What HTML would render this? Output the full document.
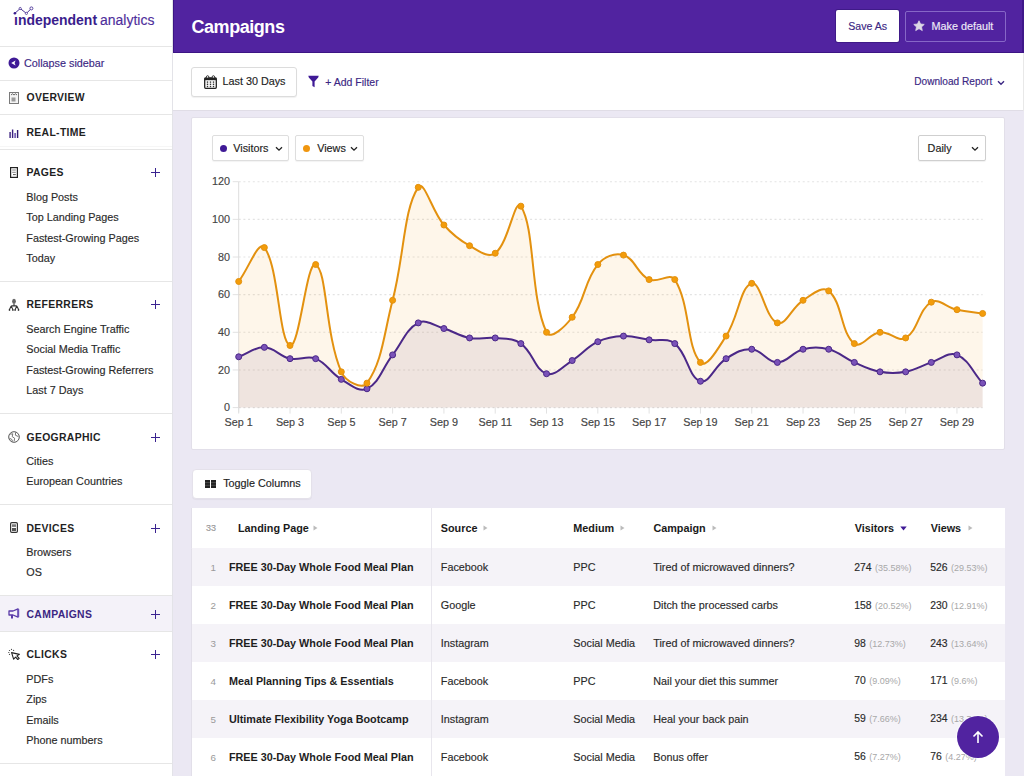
<!DOCTYPE html>
<html><head><meta charset="utf-8"><style>
html,body{margin:0;padding:0;width:1024px;height:776px;overflow:hidden;background:#fff;font-family:"Liberation Sans", sans-serif;}
.t{position:absolute;white-space:nowrap;line-height:1;-webkit-text-stroke:0.15px currentColor;}
</style></head><body>
<div style="position:absolute;left:0px;top:0px;width:172px;height:776px;background:#fff;"></div>
<div style="position:absolute;left:172px;top:0px;width:1px;height:776px;background:#e3e3e8;"></div>
<svg style="position:absolute;left:0px;top:0px" width="40" height="20" viewBox="0 0 40 20"><polyline points="14.9,13.3 20.2,8.5 26.4,13.4 31.4,8.4" fill="none" stroke="#4a3396" stroke-width="1"/><circle cx="14.9" cy="13.3" r="1.3" fill="#3a1d8c"/><circle cx="20.2" cy="8.5" r="1.1" fill="#fff" stroke="#4a3396" stroke-width="0.8"/><circle cx="26.4" cy="13.4" r="1.1" fill="#fff" stroke="#4a3396" stroke-width="0.8"/><circle cx="31.4" cy="8.4" r="1.5" fill="#fff" stroke="#4a3396" stroke-width="0.9"/></svg>
<div class="t" style="left:13.6px;top:11.73px;font-size:15.2px;font-weight:bold;color:#3a1d8c;-webkit-text-stroke:0;transform:scaleX(0.92);transform-origin:0 0;">&#305;ndependent</div>
<div class="t" style="left:100px;top:11.73px;font-size:15.2px;font-weight:normal;color:#4f2f9c;transform:scaleX(0.92);transform-origin:0 0;">analytics</div>
<div style="position:absolute;left:0px;top:46px;width:172px;height:1px;background:#e6e6e6;"></div>
<div style="position:absolute;left:0px;top:80px;width:172px;height:1px;background:#e6e6e6;"></div>
<div style="position:absolute;left:0px;top:114px;width:172px;height:1px;background:#e6e6e6;"></div>
<div style="position:absolute;left:0px;top:149px;width:172px;height:1px;background:#e6e6e6;"></div>
<div style="position:absolute;left:0px;top:281px;width:172px;height:1px;background:#e6e6e6;"></div>
<div style="position:absolute;left:0px;top:413px;width:172px;height:1px;background:#e6e6e6;"></div>
<div style="position:absolute;left:0px;top:504px;width:172px;height:1px;background:#e6e6e6;"></div>
<div style="position:absolute;left:0px;top:595px;width:172px;height:1px;background:#e6e6e6;"></div>
<div style="position:absolute;left:0px;top:631px;width:172px;height:1px;background:#e6e6e6;"></div>
<div style="position:absolute;left:0px;top:763px;width:172px;height:1px;background:#e6e6e6;"></div>
<div style="position:absolute;left:0px;top:146px;width:172px;height:1px;background:#f6f6f6;"></div>
<div style="position:absolute;left:0px;top:596px;width:172px;height:35px;background:#f4f2f9;"></div>
<svg style="position:absolute;left:8px;top:57px" width="12" height="12" viewBox="0 0 12 12"><circle cx="6" cy="6" r="5.5" fill="#3f1a96"/><path d="M3.2,6 L7.6,3.6 L6.6,6 L7.6,8.4 Z" fill="#fff"/></svg>
<div class="t" style="left:24px;top:57.66px;font-size:10.8px;font-weight:normal;color:#3b2783;">Collapse sidebar</div>
<svg style="position:absolute;left:9px;top:92px" width="10" height="12" viewBox="0 0 10 12"><rect x="0.5" y="0.5" width="9" height="11" fill="#f4f4f4" stroke="#7a7a7a" stroke-width="1"/><path d="M2,3 L3.5,1.8 L5,3 L6.5,1.8 L8,3" fill="none" stroke="#666" stroke-width="1"/><rect x="2.5" y="5.5" width="4" height="4" fill="#9a9a9a"/></svg>
<div class="t" style="left:26.5px;top:93.20px;font-size:10.4px;font-weight:bold;color:#1f1f1f;-webkit-text-stroke:0;letter-spacing:0.33px;">OVERVIEW</div>
<svg style="position:absolute;left:9px;top:129px" width="10" height="9" viewBox="0 0 10 9"><rect x="0.4" y="3" width="1.4" height="6" fill="#3b2180"/><rect x="2.9" y="0.5" width="1.4" height="8.5" fill="#3b2180"/><rect x="5.4" y="4" width="1.4" height="5" fill="#5a40a8"/><rect x="7.9" y="1" width="1.4" height="8" fill="#2f1a70"/></svg>
<div class="t" style="left:26.5px;top:127.90px;font-size:10.4px;font-weight:bold;color:#1f1f1f;-webkit-text-stroke:0;letter-spacing:0.33px;">REAL-TIME</div>
<svg style="position:absolute;left:10px;top:167px" width="8" height="11" viewBox="0 0 8 11"><rect x="0.6" y="0.6" width="6.8" height="9.8" fill="none" stroke="#222" stroke-width="1.2"/><line x1="2.2" y1="3" x2="5.8" y2="3" stroke="#777" stroke-width="0.9"/><line x1="2.2" y1="5.3" x2="5.8" y2="5.3" stroke="#777" stroke-width="0.9"/><line x1="3" y1="7.6" x2="5.8" y2="7.6" stroke="#444" stroke-width="0.9"/></svg>
<div class="t" style="left:26.5px;top:167.90px;font-size:10.4px;font-weight:bold;color:#1f1f1f;-webkit-text-stroke:0;letter-spacing:0.33px;">PAGES</div>
<div style="position:absolute;left:151px;top:171.9px;width:9px;height:1.3px;background:#3a2390;"></div>
<div style="position:absolute;left:154.9px;top:168.1px;width:1.3px;height:9px;background:#3a2390;"></div>
<div class="t" style="left:26.3px;top:191.96px;font-size:10.8px;font-weight:normal;color:#2a2a2a;">Blog Posts</div>
<div class="t" style="left:26.3px;top:212.33px;font-size:10.8px;font-weight:normal;color:#2a2a2a;">Top Landing Pages</div>
<div class="t" style="left:26.3px;top:232.70px;font-size:10.8px;font-weight:normal;color:#2a2a2a;">Fastest-Growing Pages</div>
<div class="t" style="left:26.3px;top:253.07px;font-size:10.8px;font-weight:normal;color:#2a2a2a;">Today</div>
<svg style="position:absolute;left:8px;top:298px" width="12" height="13" viewBox="0 0 12 13"><ellipse cx="6" cy="3.2" rx="1.9" ry="2.5" fill="#666"/><path d="M6,5.5 V7.6 M3.2,7.9 H8.8 M3.2,7.9 L1.2,12 M3.2,7.9 L5,12 M8.8,7.9 L7,12 M8.8,7.9 L10.8,12" fill="none" stroke="#333" stroke-width="1.1"/><path d="M0.8,12.2 H2.2 M4.2,12.2 H5.6 M6.4,12.2 H7.8 M9.8,12.2 H11.2" stroke="#222" stroke-width="1.2"/></svg>
<div class="t" style="left:26.5px;top:300.00px;font-size:10.4px;font-weight:bold;color:#1f1f1f;-webkit-text-stroke:0;letter-spacing:0.33px;">REFERRERS</div>
<div style="position:absolute;left:151px;top:303.99999999999994px;width:9px;height:1.3px;background:#3a2390;"></div>
<div style="position:absolute;left:154.9px;top:300.2px;width:1.3px;height:9px;background:#3a2390;"></div>
<div class="t" style="left:26.3px;top:323.86px;font-size:10.8px;font-weight:normal;color:#2a2a2a;">Search Engine Traffic</div>
<div class="t" style="left:26.3px;top:344.23px;font-size:10.8px;font-weight:normal;color:#2a2a2a;">Social Media Traffic</div>
<div class="t" style="left:26.3px;top:364.60px;font-size:10.8px;font-weight:normal;color:#2a2a2a;">Fastest-Growing Referrers</div>
<div class="t" style="left:26.3px;top:384.97px;font-size:10.8px;font-weight:normal;color:#2a2a2a;">Last 7 Days</div>
<svg style="position:absolute;left:8px;top:430.5px" width="12" height="12" viewBox="0 0 12 12"><circle cx="6" cy="6" r="5.3" fill="none" stroke="#555" stroke-width="1"/><path d="M2.2,3.2 L4.8,2.8 L4.2,5.6 L6.6,7.2 L6.2,10.2 M7.6,1.4 L7.4,4.2 L10.4,5.6 M1.6,7.4 L3.6,8.2 L4.6,10.4" fill="none" stroke="#666" stroke-width="0.9"/></svg>
<div class="t" style="left:26.5px;top:432.60px;font-size:10.4px;font-weight:bold;color:#1f1f1f;-webkit-text-stroke:0;letter-spacing:0.33px;">GEOGRAPHIC</div>
<div style="position:absolute;left:151px;top:436.59999999999997px;width:9px;height:1.3px;background:#3a2390;"></div>
<div style="position:absolute;left:154.9px;top:432.8px;width:1.3px;height:9px;background:#3a2390;"></div>
<div class="t" style="left:26.3px;top:455.86px;font-size:10.8px;font-weight:normal;color:#2a2a2a;">Cities</div>
<div class="t" style="left:26.3px;top:475.96px;font-size:10.8px;font-weight:normal;color:#2a2a2a;">European Countries</div>
<svg style="position:absolute;left:10px;top:522px" width="8" height="11" viewBox="0 0 8 11"><rect x="0.6" y="0.6" width="6.8" height="9.8" rx="1.2" fill="none" stroke="#333" stroke-width="1.2"/><rect x="2" y="2.3" width="4" height="2.6" fill="#777"/><rect x="2" y="6" width="4" height="3" fill="#555"/></svg>
<div class="t" style="left:26.5px;top:523.50px;font-size:10.4px;font-weight:bold;color:#1f1f1f;-webkit-text-stroke:0;letter-spacing:0.33px;">DEVICES</div>
<div style="position:absolute;left:151px;top:527.5px;width:9px;height:1.3px;background:#3a2390;"></div>
<div style="position:absolute;left:154.9px;top:523.7px;width:1.3px;height:9px;background:#3a2390;"></div>
<div class="t" style="left:26.3px;top:546.86px;font-size:10.8px;font-weight:normal;color:#2a2a2a;">Browsers</div>
<div class="t" style="left:26.3px;top:566.96px;font-size:10.8px;font-weight:normal;color:#2a2a2a;">OS</div>
<svg style="position:absolute;left:8px;top:608px" width="12" height="11" viewBox="0 0 12 11"><path d="M1,3 L5,3 L10,0.8 L10,9.2 L5,7 L1,7 Z" fill="none" stroke="#5a3aa8" stroke-width="1.3" stroke-linejoin="round"/><rect x="3" y="7" width="2" height="3.5" fill="#5a3aa8"/><rect x="9.6" y="1" width="1.6" height="8" fill="#6a50b8"/></svg>
<div class="t" style="left:26.5px;top:609.70px;font-size:10.4px;font-weight:bold;color:#3b2783;-webkit-text-stroke:0;letter-spacing:0.33px;">CAMPAIGNS</div>
<div style="position:absolute;left:151px;top:613.7px;width:9px;height:1.3px;background:#3a2390;"></div>
<div style="position:absolute;left:154.9px;top:609.9000000000001px;width:1.3px;height:9px;background:#3a2390;"></div>
<svg style="position:absolute;left:8px;top:648px" width="13" height="13" viewBox="0 0 13 13"><path d="M3.6,4.6 L11.4,6.4 L8.9,7.9 L11.2,10.3 L9.8,11.5 L7.6,9.2 L5.6,11.2 Z" fill="#fff" stroke="#222" stroke-width="1.1" stroke-linejoin="round"/><g fill="#333"><circle cx="5.6" cy="2.3" r="0.65"/><circle cx="3.5" cy="1.3" r="0.6"/><circle cx="1.5" cy="2.5" r="0.6"/><circle cx="0.8" cy="4.5" r="0.6"/><circle cx="1.5" cy="6.3" r="0.6"/></g></svg>
<div class="t" style="left:26.5px;top:650.20px;font-size:10.4px;font-weight:bold;color:#1f1f1f;-webkit-text-stroke:0;letter-spacing:0.33px;">CLICKS</div>
<div style="position:absolute;left:151px;top:654.2px;width:9px;height:1.3px;background:#3a2390;"></div>
<div style="position:absolute;left:154.9px;top:650.4000000000001px;width:1.3px;height:9px;background:#3a2390;"></div>
<div class="t" style="left:26.3px;top:673.76px;font-size:10.8px;font-weight:normal;color:#2a2a2a;">PDFs</div>
<div class="t" style="left:26.3px;top:694.13px;font-size:10.8px;font-weight:normal;color:#2a2a2a;">Zips</div>
<div class="t" style="left:26.3px;top:714.50px;font-size:10.8px;font-weight:normal;color:#2a2a2a;">Emails</div>
<div class="t" style="left:26.3px;top:734.87px;font-size:10.8px;font-weight:normal;color:#2a2a2a;">Phone numbers</div>
<div style="position:absolute;left:173px;top:0px;width:851px;height:776px;background:#ebe8f3;"></div>
<div style="position:absolute;left:173px;top:0px;width:851px;height:53px;background:#5123a0;"></div>
<div style="position:absolute;left:173px;top:0px;width:1px;height:53px;background:#3c1584;"></div>
<div style="position:absolute;left:173px;top:52px;width:851px;height:1px;background:#3c1584;"></div>
<div style="position:absolute;left:1022px;top:0px;width:2px;height:53px;background:#3f178a;"></div>
<div class="t" style="left:191.5px;top:17.66px;font-size:18px;font-weight:bold;color:#fff;-webkit-text-stroke:0;letter-spacing:-0.45px;">Campaigns</div>
<div style="position:absolute;left:835px;top:9px;width:65px;height:34px;background:#3f1a88;border-radius:3px;"></div>
<div style="position:absolute;left:836px;top:10px;width:63px;height:32px;background:#fff;border-radius:2px;"></div>
<div class="t" style="left:848.3px;top:20.83px;font-size:10.6px;font-weight:normal;color:#3b2783;">Save As</div>
<div style="position:absolute;left:904.5px;top:10.5px;width:101px;height:31px;border:1px solid #8667c7;box-sizing:border-box;border-radius:2px;"></div>
<svg style="position:absolute;left:913px;top:20px" width="12" height="12" viewBox="0 0 24 24"><path d="M12,1.5 L15.1,8 L22.5,8.8 L17,13.8 L18.6,21.2 L12,17.4 L5.4,21.2 L7,13.8 L1.5,8.8 L8.9,8 Z" fill="#ddd8e6" stroke="#ddd8e6" stroke-width="1.5" stroke-linejoin="round"/></svg>
<div class="t" style="left:931.5px;top:21.06px;font-size:10.8px;font-weight:normal;color:#efeaf8;">Make default</div>
<div style="position:absolute;left:173px;top:53px;width:851px;height:58px;background:#fff;"></div>
<div style="position:absolute;left:173px;top:110px;width:851px;height:1px;background:#e0dde6;"></div>
<div style="position:absolute;left:1023px;top:53px;width:1px;height:58px;background:#e8e8e8;"></div>
<div style="position:absolute;left:191px;top:67px;width:106px;height:30px;background:#fff;border:1px solid #dcdcdc;box-sizing:border-box;border-radius:3px;box-shadow:0 1px 1px rgba(0,0,0,0.06);"></div>
<svg style="position:absolute;left:204px;top:75px" width="13" height="14" viewBox="0 0 13 14"><rect x="0.7" y="2.8" width="11.6" height="10.5" rx="1" fill="none" stroke="#222" stroke-width="1.3"/><rect x="0.7" y="2.8" width="11.6" height="2.4" fill="#222"/><circle cx="3.6" cy="1.9" r="1.2" fill="#fff" stroke="#222" stroke-width="0.9"/><circle cx="9.4" cy="1.9" r="1.2" fill="#fff" stroke="#222" stroke-width="0.9"/><g fill="#333"><rect x="2.8" y="6.4" width="1.4" height="1.4"/><rect x="5.8" y="6.4" width="1.4" height="1.4"/><rect x="8.8" y="6.4" width="1.4" height="1.4"/><rect x="2.8" y="8.6" width="1.4" height="1.4"/><rect x="5.8" y="8.6" width="1.4" height="1.4"/><rect x="8.8" y="8.6" width="1.4" height="1.4"/><rect x="2.8" y="10.8" width="1.4" height="1.4"/><rect x="5.8" y="10.8" width="1.4" height="1.4"/><rect x="8.8" y="10.8" width="1.4" height="1.4"/></g></svg>
<div class="t" style="left:222.5px;top:76.46px;font-size:10.8px;font-weight:normal;color:#222;">Last 30 Days</div>
<svg style="position:absolute;left:308px;top:75px" width="11" height="13" viewBox="0 0 11 13"><path d="M0.3,0.8 L10.7,0.8 L10.2,2.6 L6.6,6.6 L6.6,12.3 L4.4,11 L4.4,6.6 L0.8,2.6 Z" fill="#3f1a96"/></svg>
<div class="t" style="left:325.3px;top:76.51px;font-size:10.5px;font-weight:normal;color:#3b2783;">+ Add Filter</div>
<div class="t" style="left:914.3px;top:77.45px;font-size:10.1px;font-weight:normal;color:#3b2783;">Download Report</div>
<svg style="position:absolute;left:997px;top:79.6px" width="8" height="6" viewBox="0 0 8 6"><path d="M1,1.2 L4,4.2 L7,1.2" fill="none" stroke="#3b2783" stroke-width="1.4"/></svg>
<div style="position:absolute;left:191px;top:117px;width:814px;height:333px;background:#fff;border:1px solid #e2dfe9;box-sizing:border-box;border-radius:2px;"></div>

<div style="position:absolute;left:211.5px;top:135px;width:77px;height:26px;background:#fff;border:1px solid #dedede;box-sizing:border-box;border-radius:2px;box-shadow:0 1px 1px rgba(0,0,0,0.05);"></div>
<div style="position:absolute;left:219.6px;top:144.7px;width:7px;height:7px;background:#3f1a96;border-radius:50%;"></div>
<div class="t" style="left:233.3px;top:143.06px;font-size:10.8px;font-weight:normal;color:#222;">Visitors</div>
<svg style="position:absolute;left:274.5px;top:145.5px" width="8" height="6" viewBox="0 0 8 6"><path d="M1,1.2 L4,4.2 L7,1.2" fill="none" stroke="#222" stroke-width="1.3"/></svg>
<div style="position:absolute;left:294.5px;top:135px;width:69px;height:26px;background:#fff;border:1px solid #dedede;box-sizing:border-box;border-radius:2px;box-shadow:0 1px 1px rgba(0,0,0,0.05);"></div>
<div style="position:absolute;left:302.8px;top:144.7px;width:7px;height:7px;background:#f0960f;border-radius:50%;"></div>
<div class="t" style="left:317.2px;top:143.06px;font-size:10.8px;font-weight:normal;color:#222;">Views</div>
<svg style="position:absolute;left:350px;top:145.5px" width="8" height="6" viewBox="0 0 8 6"><path d="M1,1.2 L4,4.2 L7,1.2" fill="none" stroke="#222" stroke-width="1.3"/></svg>
<div style="position:absolute;left:917.5px;top:135px;width:68.5px;height:26px;background:#fff;border:1px solid #cfcfcf;box-sizing:border-box;border-radius:2px;box-shadow:0 1px 1px rgba(0,0,0,0.06);"></div>
<div class="t" style="left:927.6px;top:143.06px;font-size:10.8px;font-weight:normal;color:#222;">Daily</div>
<svg style="position:absolute;left:971px;top:145.5px" width="8" height="6" viewBox="0 0 8 6"><path d="M1,1.2 L4,4.2 L7,1.2" fill="none" stroke="#222" stroke-width="1.3"/></svg>
<svg style="position:absolute;left:0;top:0" width="1024" height="776" viewBox="0 0 1024 776"><line x1="238.7" y1="407.60" x2="982.6" y2="407.60" stroke="#e3e3e3" stroke-width="1.1" stroke-dasharray="2 2.7"/>
<line x1="232.7" y1="407.60" x2="238.7" y2="407.60" stroke="#e2e2e2" stroke-width="1"/>
<line x1="238.7" y1="369.95" x2="982.6" y2="369.95" stroke="#e3e3e3" stroke-width="1.1" stroke-dasharray="2 2.7"/>
<line x1="232.7" y1="369.95" x2="238.7" y2="369.95" stroke="#e2e2e2" stroke-width="1"/>
<line x1="238.7" y1="332.30" x2="982.6" y2="332.30" stroke="#e3e3e3" stroke-width="1.1" stroke-dasharray="2 2.7"/>
<line x1="232.7" y1="332.30" x2="238.7" y2="332.30" stroke="#e2e2e2" stroke-width="1"/>
<line x1="238.7" y1="294.65" x2="982.6" y2="294.65" stroke="#e3e3e3" stroke-width="1.1" stroke-dasharray="2 2.7"/>
<line x1="232.7" y1="294.65" x2="238.7" y2="294.65" stroke="#e2e2e2" stroke-width="1"/>
<line x1="238.7" y1="257.00" x2="982.6" y2="257.00" stroke="#e3e3e3" stroke-width="1.1" stroke-dasharray="2 2.7"/>
<line x1="232.7" y1="257.00" x2="238.7" y2="257.00" stroke="#e2e2e2" stroke-width="1"/>
<line x1="238.7" y1="219.35" x2="982.6" y2="219.35" stroke="#e3e3e3" stroke-width="1.1" stroke-dasharray="2 2.7"/>
<line x1="232.7" y1="219.35" x2="238.7" y2="219.35" stroke="#e2e2e2" stroke-width="1"/>
<line x1="238.7" y1="181.70" x2="982.6" y2="181.70" stroke="#e3e3e3" stroke-width="1.1" stroke-dasharray="2 2.7"/>
<line x1="232.7" y1="181.70" x2="238.7" y2="181.70" stroke="#e2e2e2" stroke-width="1"/>
<line x1="238.70" y1="181.70" x2="238.70" y2="412.60" stroke="#dddddd" stroke-width="1"/>
<line x1="238.70" y1="407.60" x2="238.70" y2="413.60" stroke="#e2e2e2" stroke-width="1"/>
<line x1="290.00" y1="407.60" x2="290.00" y2="413.60" stroke="#e2e2e2" stroke-width="1"/>
<line x1="341.31" y1="407.60" x2="341.31" y2="413.60" stroke="#e2e2e2" stroke-width="1"/>
<line x1="392.61" y1="407.60" x2="392.61" y2="413.60" stroke="#e2e2e2" stroke-width="1"/>
<line x1="443.92" y1="407.60" x2="443.92" y2="413.60" stroke="#e2e2e2" stroke-width="1"/>
<line x1="495.22" y1="407.60" x2="495.22" y2="413.60" stroke="#e2e2e2" stroke-width="1"/>
<line x1="546.52" y1="407.60" x2="546.52" y2="413.60" stroke="#e2e2e2" stroke-width="1"/>
<line x1="597.83" y1="407.60" x2="597.83" y2="413.60" stroke="#e2e2e2" stroke-width="1"/>
<line x1="649.13" y1="407.60" x2="649.13" y2="413.60" stroke="#e2e2e2" stroke-width="1"/>
<line x1="700.44" y1="407.60" x2="700.44" y2="413.60" stroke="#e2e2e2" stroke-width="1"/>
<line x1="751.74" y1="407.60" x2="751.74" y2="413.60" stroke="#e2e2e2" stroke-width="1"/>
<line x1="803.04" y1="407.60" x2="803.04" y2="413.60" stroke="#e2e2e2" stroke-width="1"/>
<line x1="854.35" y1="407.60" x2="854.35" y2="413.60" stroke="#e2e2e2" stroke-width="1"/>
<line x1="905.65" y1="407.60" x2="905.65" y2="413.60" stroke="#e2e2e2" stroke-width="1"/>
<line x1="956.96" y1="407.60" x2="956.96" y2="413.60" stroke="#e2e2e2" stroke-width="1"/>
<path d="M238.70,356.77 C248.96,353.01 254.22,346.99 264.35,347.36 C274.74,347.74 279.29,356.30 290.00,358.66 C299.81,360.81 306.68,355.03 315.66,358.66 C327.20,363.31 330.09,372.77 341.31,379.36 C350.61,384.82 358.93,392.61 366.96,388.78 C379.45,382.82 382.17,368.30 392.61,354.89 C402.69,341.95 405.75,329.31 418.26,322.89 C426.28,318.77 433.86,325.58 443.92,328.54 C454.38,331.61 458.98,336.01 469.57,337.95 C479.50,339.77 485.08,336.83 495.22,337.95 C505.60,339.09 512.68,337.89 520.87,343.60 C533.21,352.19 534.65,369.80 546.52,373.72 C555.18,376.57 562.42,366.62 572.18,360.54 C582.94,353.82 586.59,347.07 597.83,341.71 C607.11,337.29 613.15,336.44 623.48,336.07 C633.67,335.69 638.87,338.32 649.13,339.83 C659.39,341.34 667.34,337.59 674.78,343.60 C687.86,354.15 688.71,377.80 700.44,381.25 C709.23,383.83 714.68,365.77 726.09,358.66 C735.20,352.97 741.76,348.51 751.74,349.24 C762.28,350.02 767.13,362.42 777.39,362.42 C787.65,362.42 792.18,352.03 803.04,349.24 C812.70,346.76 819.04,346.76 828.70,349.24 C839.56,352.03 843.81,357.78 854.35,362.42 C864.33,366.82 869.42,369.89 880.00,371.83 C889.94,373.66 895.72,373.66 905.65,371.83 C916.24,369.89 920.93,365.85 931.30,362.42 C941.45,359.07 948.50,351.48 956.96,354.89 C969.02,359.76 972.35,371.83 982.61,383.13 L982.61,407.60 L238.70,407.60 Z" fill="rgba(95,70,140,0.10)"/>
<path d="M238.70,281.47 C248.96,267.92 258.28,240.02 264.35,247.59 C278.80,265.62 278.85,341.79 290.00,345.48 C299.37,348.57 306.73,259.95 315.66,264.53 C327.25,270.49 324.94,334.00 341.31,371.83 C345.47,381.44 361.95,390.12 366.96,383.13 C382.47,361.50 383.83,333.82 392.61,300.30 C404.35,255.51 403.54,208.96 418.26,187.35 C424.06,178.84 432.01,211.45 443.92,225.00 C452.53,234.80 458.24,239.47 469.57,245.71 C478.76,250.76 488.39,258.50 495.22,253.24 C508.91,242.68 514.84,196.87 520.87,206.17 C535.36,228.50 529.85,296.21 546.52,332.30 C550.38,340.64 565.27,326.37 572.18,317.24 C585.79,299.26 583.83,281.48 597.83,264.53 C604.35,256.63 614.55,252.50 623.48,255.12 C635.07,258.52 637.23,273.91 649.13,279.59 C657.75,283.70 670.10,272.03 674.78,279.59 C690.62,305.16 686.03,346.56 700.44,362.42 C706.55,369.15 718.18,348.26 726.09,336.07 C738.70,316.63 740.36,286.28 751.74,283.36 C760.89,281.01 765.50,318.96 777.39,322.89 C786.02,325.74 791.64,307.41 803.04,300.30 C812.16,294.61 822.17,285.38 828.70,290.88 C842.69,302.70 840.46,332.39 854.35,343.60 C860.99,348.95 869.41,333.47 880.00,332.30 C889.93,331.21 897.98,342.45 905.65,337.95 C918.50,330.40 918.54,309.21 931.30,302.18 C939.06,297.91 946.54,307.42 956.96,309.71 C967.06,311.93 972.35,311.97 982.61,313.48 L982.61,407.60 L238.70,407.60 Z" fill="rgba(243,151,15,0.085)"/>
<path d="M238.70,356.77 C248.96,353.01 254.22,346.99 264.35,347.36 C274.74,347.74 279.29,356.30 290.00,358.66 C299.81,360.81 306.68,355.03 315.66,358.66 C327.20,363.31 330.09,372.77 341.31,379.36 C350.61,384.82 358.93,392.61 366.96,388.78 C379.45,382.82 382.17,368.30 392.61,354.89 C402.69,341.95 405.75,329.31 418.26,322.89 C426.28,318.77 433.86,325.58 443.92,328.54 C454.38,331.61 458.98,336.01 469.57,337.95 C479.50,339.77 485.08,336.83 495.22,337.95 C505.60,339.09 512.68,337.89 520.87,343.60 C533.21,352.19 534.65,369.80 546.52,373.72 C555.18,376.57 562.42,366.62 572.18,360.54 C582.94,353.82 586.59,347.07 597.83,341.71 C607.11,337.29 613.15,336.44 623.48,336.07 C633.67,335.69 638.87,338.32 649.13,339.83 C659.39,341.34 667.34,337.59 674.78,343.60 C687.86,354.15 688.71,377.80 700.44,381.25 C709.23,383.83 714.68,365.77 726.09,358.66 C735.20,352.97 741.76,348.51 751.74,349.24 C762.28,350.02 767.13,362.42 777.39,362.42 C787.65,362.42 792.18,352.03 803.04,349.24 C812.70,346.76 819.04,346.76 828.70,349.24 C839.56,352.03 843.81,357.78 854.35,362.42 C864.33,366.82 869.42,369.89 880.00,371.83 C889.94,373.66 895.72,373.66 905.65,371.83 C916.24,369.89 920.93,365.85 931.30,362.42 C941.45,359.07 948.50,351.48 956.96,354.89 C969.02,359.76 972.35,371.83 982.61,383.13" fill="none" stroke="#4b2888" stroke-width="2"/>
<circle cx="238.70" cy="356.77" r="3" fill="#7a52b8" stroke="#4b2888" stroke-width="1"/>
<circle cx="264.35" cy="347.36" r="3" fill="#7a52b8" stroke="#4b2888" stroke-width="1"/>
<circle cx="290.00" cy="358.66" r="3" fill="#7a52b8" stroke="#4b2888" stroke-width="1"/>
<circle cx="315.66" cy="358.66" r="3" fill="#7a52b8" stroke="#4b2888" stroke-width="1"/>
<circle cx="341.31" cy="379.36" r="3" fill="#7a52b8" stroke="#4b2888" stroke-width="1"/>
<circle cx="366.96" cy="388.78" r="3" fill="#7a52b8" stroke="#4b2888" stroke-width="1"/>
<circle cx="392.61" cy="354.89" r="3" fill="#7a52b8" stroke="#4b2888" stroke-width="1"/>
<circle cx="418.26" cy="322.89" r="3" fill="#7a52b8" stroke="#4b2888" stroke-width="1"/>
<circle cx="443.92" cy="328.54" r="3" fill="#7a52b8" stroke="#4b2888" stroke-width="1"/>
<circle cx="469.57" cy="337.95" r="3" fill="#7a52b8" stroke="#4b2888" stroke-width="1"/>
<circle cx="495.22" cy="337.95" r="3" fill="#7a52b8" stroke="#4b2888" stroke-width="1"/>
<circle cx="520.87" cy="343.60" r="3" fill="#7a52b8" stroke="#4b2888" stroke-width="1"/>
<circle cx="546.52" cy="373.72" r="3" fill="#7a52b8" stroke="#4b2888" stroke-width="1"/>
<circle cx="572.18" cy="360.54" r="3" fill="#7a52b8" stroke="#4b2888" stroke-width="1"/>
<circle cx="597.83" cy="341.71" r="3" fill="#7a52b8" stroke="#4b2888" stroke-width="1"/>
<circle cx="623.48" cy="336.07" r="3" fill="#7a52b8" stroke="#4b2888" stroke-width="1"/>
<circle cx="649.13" cy="339.83" r="3" fill="#7a52b8" stroke="#4b2888" stroke-width="1"/>
<circle cx="674.78" cy="343.60" r="3" fill="#7a52b8" stroke="#4b2888" stroke-width="1"/>
<circle cx="700.44" cy="381.25" r="3" fill="#7a52b8" stroke="#4b2888" stroke-width="1"/>
<circle cx="726.09" cy="358.66" r="3" fill="#7a52b8" stroke="#4b2888" stroke-width="1"/>
<circle cx="751.74" cy="349.24" r="3" fill="#7a52b8" stroke="#4b2888" stroke-width="1"/>
<circle cx="777.39" cy="362.42" r="3" fill="#7a52b8" stroke="#4b2888" stroke-width="1"/>
<circle cx="803.04" cy="349.24" r="3" fill="#7a52b8" stroke="#4b2888" stroke-width="1"/>
<circle cx="828.70" cy="349.24" r="3" fill="#7a52b8" stroke="#4b2888" stroke-width="1"/>
<circle cx="854.35" cy="362.42" r="3" fill="#7a52b8" stroke="#4b2888" stroke-width="1"/>
<circle cx="880.00" cy="371.83" r="3" fill="#7a52b8" stroke="#4b2888" stroke-width="1"/>
<circle cx="905.65" cy="371.83" r="3" fill="#7a52b8" stroke="#4b2888" stroke-width="1"/>
<circle cx="931.30" cy="362.42" r="3" fill="#7a52b8" stroke="#4b2888" stroke-width="1"/>
<circle cx="956.96" cy="354.89" r="3" fill="#7a52b8" stroke="#4b2888" stroke-width="1"/>
<circle cx="982.61" cy="383.13" r="3" fill="#7a52b8" stroke="#4b2888" stroke-width="1"/>
<path d="M238.70,281.47 C248.96,267.92 258.28,240.02 264.35,247.59 C278.80,265.62 278.85,341.79 290.00,345.48 C299.37,348.57 306.73,259.95 315.66,264.53 C327.25,270.49 324.94,334.00 341.31,371.83 C345.47,381.44 361.95,390.12 366.96,383.13 C382.47,361.50 383.83,333.82 392.61,300.30 C404.35,255.51 403.54,208.96 418.26,187.35 C424.06,178.84 432.01,211.45 443.92,225.00 C452.53,234.80 458.24,239.47 469.57,245.71 C478.76,250.76 488.39,258.50 495.22,253.24 C508.91,242.68 514.84,196.87 520.87,206.17 C535.36,228.50 529.85,296.21 546.52,332.30 C550.38,340.64 565.27,326.37 572.18,317.24 C585.79,299.26 583.83,281.48 597.83,264.53 C604.35,256.63 614.55,252.50 623.48,255.12 C635.07,258.52 637.23,273.91 649.13,279.59 C657.75,283.70 670.10,272.03 674.78,279.59 C690.62,305.16 686.03,346.56 700.44,362.42 C706.55,369.15 718.18,348.26 726.09,336.07 C738.70,316.63 740.36,286.28 751.74,283.36 C760.89,281.01 765.50,318.96 777.39,322.89 C786.02,325.74 791.64,307.41 803.04,300.30 C812.16,294.61 822.17,285.38 828.70,290.88 C842.69,302.70 840.46,332.39 854.35,343.60 C860.99,348.95 869.41,333.47 880.00,332.30 C889.93,331.21 897.98,342.45 905.65,337.95 C918.50,330.40 918.54,309.21 931.30,302.18 C939.06,297.91 946.54,307.42 956.96,309.71 C967.06,311.93 972.35,311.97 982.61,313.48" fill="none" stroke="#e3910f" stroke-width="2"/>
<circle cx="238.70" cy="281.47" r="3" fill="#f39c0a" stroke="#e3910f" stroke-width="1"/>
<circle cx="264.35" cy="247.59" r="3" fill="#f39c0a" stroke="#e3910f" stroke-width="1"/>
<circle cx="290.00" cy="345.48" r="3" fill="#f39c0a" stroke="#e3910f" stroke-width="1"/>
<circle cx="315.66" cy="264.53" r="3" fill="#f39c0a" stroke="#e3910f" stroke-width="1"/>
<circle cx="341.31" cy="371.83" r="3" fill="#f39c0a" stroke="#e3910f" stroke-width="1"/>
<circle cx="366.96" cy="383.13" r="3" fill="#f39c0a" stroke="#e3910f" stroke-width="1"/>
<circle cx="392.61" cy="300.30" r="3" fill="#f39c0a" stroke="#e3910f" stroke-width="1"/>
<circle cx="418.26" cy="187.35" r="3" fill="#f39c0a" stroke="#e3910f" stroke-width="1"/>
<circle cx="443.92" cy="225.00" r="3" fill="#f39c0a" stroke="#e3910f" stroke-width="1"/>
<circle cx="469.57" cy="245.71" r="3" fill="#f39c0a" stroke="#e3910f" stroke-width="1"/>
<circle cx="495.22" cy="253.24" r="3" fill="#f39c0a" stroke="#e3910f" stroke-width="1"/>
<circle cx="520.87" cy="206.17" r="3" fill="#f39c0a" stroke="#e3910f" stroke-width="1"/>
<circle cx="546.52" cy="332.30" r="3" fill="#f39c0a" stroke="#e3910f" stroke-width="1"/>
<circle cx="572.18" cy="317.24" r="3" fill="#f39c0a" stroke="#e3910f" stroke-width="1"/>
<circle cx="597.83" cy="264.53" r="3" fill="#f39c0a" stroke="#e3910f" stroke-width="1"/>
<circle cx="623.48" cy="255.12" r="3" fill="#f39c0a" stroke="#e3910f" stroke-width="1"/>
<circle cx="649.13" cy="279.59" r="3" fill="#f39c0a" stroke="#e3910f" stroke-width="1"/>
<circle cx="674.78" cy="279.59" r="3" fill="#f39c0a" stroke="#e3910f" stroke-width="1"/>
<circle cx="700.44" cy="362.42" r="3" fill="#f39c0a" stroke="#e3910f" stroke-width="1"/>
<circle cx="726.09" cy="336.07" r="3" fill="#f39c0a" stroke="#e3910f" stroke-width="1"/>
<circle cx="751.74" cy="283.36" r="3" fill="#f39c0a" stroke="#e3910f" stroke-width="1"/>
<circle cx="777.39" cy="322.89" r="3" fill="#f39c0a" stroke="#e3910f" stroke-width="1"/>
<circle cx="803.04" cy="300.30" r="3" fill="#f39c0a" stroke="#e3910f" stroke-width="1"/>
<circle cx="828.70" cy="290.88" r="3" fill="#f39c0a" stroke="#e3910f" stroke-width="1"/>
<circle cx="854.35" cy="343.60" r="3" fill="#f39c0a" stroke="#e3910f" stroke-width="1"/>
<circle cx="880.00" cy="332.30" r="3" fill="#f39c0a" stroke="#e3910f" stroke-width="1"/>
<circle cx="905.65" cy="337.95" r="3" fill="#f39c0a" stroke="#e3910f" stroke-width="1"/>
<circle cx="931.30" cy="302.18" r="3" fill="#f39c0a" stroke="#e3910f" stroke-width="1"/>
<circle cx="956.96" cy="309.71" r="3" fill="#f39c0a" stroke="#e3910f" stroke-width="1"/>
<circle cx="982.61" cy="313.48" r="3" fill="#f39c0a" stroke="#e3910f" stroke-width="1"/></svg>
<div class="t" style="left:0px;top:402.26px;font-size:10.8px;font-weight:normal;color:#444;width:230px;text-align:right;">0</div>
<div class="t" style="left:0px;top:364.61px;font-size:10.8px;font-weight:normal;color:#444;width:230px;text-align:right;">20</div>
<div class="t" style="left:0px;top:326.96px;font-size:10.8px;font-weight:normal;color:#444;width:230px;text-align:right;">40</div>
<div class="t" style="left:0px;top:289.31px;font-size:10.8px;font-weight:normal;color:#444;width:230px;text-align:right;">60</div>
<div class="t" style="left:0px;top:251.66px;font-size:10.8px;font-weight:normal;color:#444;width:230px;text-align:right;">80</div>
<div class="t" style="left:0px;top:214.01px;font-size:10.8px;font-weight:normal;color:#444;width:230px;text-align:right;">100</div>
<div class="t" style="left:0px;top:176.36px;font-size:10.8px;font-weight:normal;color:#444;width:230px;text-align:right;">120</div>
<div class="t" style="left:198.7px;top:416.86px;font-size:10.8px;font-weight:normal;color:#444;width:80px;text-align:center;">Sep 1</div>
<div class="t" style="left:250.00400000000002px;top:416.86px;font-size:10.8px;font-weight:normal;color:#444;width:80px;text-align:center;">Sep 3</div>
<div class="t" style="left:301.308px;top:416.86px;font-size:10.8px;font-weight:normal;color:#444;width:80px;text-align:center;">Sep 5</div>
<div class="t" style="left:352.61199999999997px;top:416.86px;font-size:10.8px;font-weight:normal;color:#444;width:80px;text-align:center;">Sep 7</div>
<div class="t" style="left:403.916px;top:416.86px;font-size:10.8px;font-weight:normal;color:#444;width:80px;text-align:center;">Sep 9</div>
<div class="t" style="left:455.21999999999997px;top:416.86px;font-size:10.8px;font-weight:normal;color:#444;width:80px;text-align:center;">Sep 11</div>
<div class="t" style="left:506.524px;top:416.86px;font-size:10.8px;font-weight:normal;color:#444;width:80px;text-align:center;">Sep 13</div>
<div class="t" style="left:557.828px;top:416.86px;font-size:10.8px;font-weight:normal;color:#444;width:80px;text-align:center;">Sep 15</div>
<div class="t" style="left:609.1320000000001px;top:416.86px;font-size:10.8px;font-weight:normal;color:#444;width:80px;text-align:center;">Sep 17</div>
<div class="t" style="left:660.4359999999999px;top:416.86px;font-size:10.8px;font-weight:normal;color:#444;width:80px;text-align:center;">Sep 19</div>
<div class="t" style="left:711.74px;top:416.86px;font-size:10.8px;font-weight:normal;color:#444;width:80px;text-align:center;">Sep 21</div>
<div class="t" style="left:763.0440000000001px;top:416.86px;font-size:10.8px;font-weight:normal;color:#444;width:80px;text-align:center;">Sep 23</div>
<div class="t" style="left:814.348px;top:416.86px;font-size:10.8px;font-weight:normal;color:#444;width:80px;text-align:center;">Sep 25</div>
<div class="t" style="left:865.652px;top:416.86px;font-size:10.8px;font-weight:normal;color:#444;width:80px;text-align:center;">Sep 27</div>
<div class="t" style="left:916.9560000000001px;top:416.86px;font-size:10.8px;font-weight:normal;color:#444;width:80px;text-align:center;">Sep 29</div>
<div style="position:absolute;left:191.5px;top:468.5px;width:120.5px;height:30px;background:#fff;border:1px solid #e4e1ea;box-sizing:border-box;border-radius:4px;box-shadow:0 1px 1px rgba(0,0,0,0.04);"></div>
<svg style="position:absolute;left:205px;top:480px" width="11" height="8" viewBox="0 0 11 8"><rect x="0" y="0" width="5" height="8" fill="#222"/><rect x="6" y="0" width="5" height="8" fill="#222"/><path d="M0,2.6 H5 M0,5.3 H5 M6,2.6 H11 M6,5.3 H11" stroke="#666" stroke-width="0.6"/></svg>
<div class="t" style="left:223.2px;top:477.96px;font-size:10.8px;font-weight:normal;color:#222;">Toggle Columns</div>
<div style="position:absolute;left:191px;top:508px;width:814px;height:268px;background:#fff;"></div>
<div style="position:absolute;left:191px;top:508px;width:1px;height:268px;background:#e2dfe9;"></div>
<div style="position:absolute;left:191px;top:547.5px;width:814px;height:1px;background:#e6e4ec;"></div>
<div style="position:absolute;left:192px;top:548.3px;width:813px;height:37.9px;background:#f5f3f8;"></div>
<div style="position:absolute;left:192px;top:624.0999999999999px;width:813px;height:37.9px;background:#f5f3f8;"></div>
<div style="position:absolute;left:192px;top:699.9px;width:813px;height:37.9px;background:#f5f3f8;"></div>
<div style="position:absolute;left:431px;top:508px;width:1px;height:268px;background:#e8e6ed;"></div>
<div class="t" style="left:191px;top:523.88px;font-size:9px;font-weight:normal;color:#999;width:25px;text-align:right;">33</div>
<div class="t" style="left:238px;top:523.06px;font-size:10.8px;font-weight:bold;color:#1a1a1a;-webkit-text-stroke:0;">Landing Page</div>
<svg style="position:absolute;left:313.4px;top:525.2px" width="5" height="6" viewBox="0 0 5 6"><path d="M0.5,0.5 L4.5,3 L0.5,5.5 Z" fill="#bbb"/></svg>
<div class="t" style="left:440.8px;top:523.06px;font-size:10.8px;font-weight:bold;color:#1a1a1a;-webkit-text-stroke:0;">Source</div>
<svg style="position:absolute;left:483.2px;top:525.2px" width="5" height="6" viewBox="0 0 5 6"><path d="M0.5,0.5 L4.5,3 L0.5,5.5 Z" fill="#bbb"/></svg>
<div class="t" style="left:573.3px;top:523.06px;font-size:10.8px;font-weight:bold;color:#1a1a1a;-webkit-text-stroke:0;">Medium</div>
<svg style="position:absolute;left:620.2px;top:525.2px" width="5" height="6" viewBox="0 0 5 6"><path d="M0.5,0.5 L4.5,3 L0.5,5.5 Z" fill="#bbb"/></svg>
<div class="t" style="left:653.4px;top:523.06px;font-size:10.8px;font-weight:bold;color:#1a1a1a;-webkit-text-stroke:0;">Campaign</div>
<svg style="position:absolute;left:711.5px;top:525.2px" width="5" height="6" viewBox="0 0 5 6"><path d="M0.5,0.5 L4.5,3 L0.5,5.5 Z" fill="#bbb"/></svg>
<div class="t" style="left:854.7px;top:523.06px;font-size:10.8px;font-weight:bold;color:#1a1a1a;-webkit-text-stroke:0;">Visitors</div>
<svg style="position:absolute;left:900px;top:525.5px" width="7" height="5" viewBox="0 0 7 5"><path d="M0.3,0.5 L6.7,0.5 L3.5,4.5 Z" fill="#3f1a96"/></svg>
<div class="t" style="left:930.7px;top:523.06px;font-size:10.8px;font-weight:bold;color:#1a1a1a;-webkit-text-stroke:0;">Views</div>
<svg style="position:absolute;left:967.5px;top:525.2px" width="5" height="6" viewBox="0 0 5 6"><path d="M0.5,0.5 L4.5,3 L0.5,5.5 Z" fill="#bbb"/></svg>
<div class="t" style="left:191px;top:563.20px;font-size:9.8px;font-weight:normal;color:#9a9a9a;width:25px;text-align:right;-webkit-text-stroke:0;">1</div>
<div class="t" style="left:228.9px;top:562.36px;font-size:10.8px;font-weight:bold;color:#1e1e1e;-webkit-text-stroke:0;">FREE 30-Day Whole Food Meal Plan</div>
<div class="t" style="left:440.8px;top:562.36px;font-size:10.8px;font-weight:normal;color:#2a2a2a;">Facebook</div>
<div class="t" style="left:573.3px;top:562.36px;font-size:10.8px;font-weight:normal;color:#2a2a2a;">PPC</div>
<div class="t" style="left:653.2px;top:562.36px;font-size:10.8px;font-weight:normal;color:#2a2a2a;">Tired of microwaved dinners?</div>
<div class="t" style="left:854.3px;top:562.70px;font-size:10.4px;color:#2a2a2a">274<span style="font-size:9px;color:#a8a8a8;margin-left:3.4px;-webkit-text-stroke:0">(35.58%)</span></div>
<div class="t" style="left:930.3px;top:562.70px;font-size:10.4px;color:#2a2a2a">526<span style="font-size:9px;color:#a8a8a8;margin-left:3.4px;-webkit-text-stroke:0">(29.53%)</span></div>
<div class="t" style="left:191px;top:601.10px;font-size:9.8px;font-weight:normal;color:#9a9a9a;width:25px;text-align:right;-webkit-text-stroke:0;">2</div>
<div class="t" style="left:228.9px;top:600.26px;font-size:10.8px;font-weight:bold;color:#1e1e1e;-webkit-text-stroke:0;">FREE 30-Day Whole Food Meal Plan</div>
<div class="t" style="left:440.8px;top:600.26px;font-size:10.8px;font-weight:normal;color:#2a2a2a;">Google</div>
<div class="t" style="left:573.3px;top:600.26px;font-size:10.8px;font-weight:normal;color:#2a2a2a;">PPC</div>
<div class="t" style="left:653.2px;top:600.26px;font-size:10.8px;font-weight:normal;color:#2a2a2a;">Ditch the processed carbs</div>
<div class="t" style="left:854.3px;top:600.60px;font-size:10.4px;color:#2a2a2a">158<span style="font-size:9px;color:#a8a8a8;margin-left:3.4px;-webkit-text-stroke:0">(20.52%)</span></div>
<div class="t" style="left:930.3px;top:600.60px;font-size:10.4px;color:#2a2a2a">230<span style="font-size:9px;color:#a8a8a8;margin-left:3.4px;-webkit-text-stroke:0">(12.91%)</span></div>
<div class="t" style="left:191px;top:639.00px;font-size:9.8px;font-weight:normal;color:#9a9a9a;width:25px;text-align:right;-webkit-text-stroke:0;">3</div>
<div class="t" style="left:228.9px;top:638.16px;font-size:10.8px;font-weight:bold;color:#1e1e1e;-webkit-text-stroke:0;">FREE 30-Day Whole Food Meal Plan</div>
<div class="t" style="left:440.8px;top:638.16px;font-size:10.8px;font-weight:normal;color:#2a2a2a;">Instagram</div>
<div class="t" style="left:573.3px;top:638.16px;font-size:10.8px;font-weight:normal;color:#2a2a2a;">Social Media</div>
<div class="t" style="left:653.2px;top:638.16px;font-size:10.8px;font-weight:normal;color:#2a2a2a;">Tired of microwaved dinners?</div>
<div class="t" style="left:854.3px;top:638.50px;font-size:10.4px;color:#2a2a2a">98<span style="font-size:9px;color:#a8a8a8;margin-left:3.4px;-webkit-text-stroke:0">(12.73%)</span></div>
<div class="t" style="left:930.3px;top:638.50px;font-size:10.4px;color:#2a2a2a">243<span style="font-size:9px;color:#a8a8a8;margin-left:3.4px;-webkit-text-stroke:0">(13.64%)</span></div>
<div class="t" style="left:191px;top:676.90px;font-size:9.8px;font-weight:normal;color:#9a9a9a;width:25px;text-align:right;-webkit-text-stroke:0;">4</div>
<div class="t" style="left:228.9px;top:676.06px;font-size:10.8px;font-weight:bold;color:#1e1e1e;-webkit-text-stroke:0;">Meal Planning Tips &amp; Essentials</div>
<div class="t" style="left:440.8px;top:676.06px;font-size:10.8px;font-weight:normal;color:#2a2a2a;">Facebook</div>
<div class="t" style="left:573.3px;top:676.06px;font-size:10.8px;font-weight:normal;color:#2a2a2a;">PPC</div>
<div class="t" style="left:653.2px;top:676.06px;font-size:10.8px;font-weight:normal;color:#2a2a2a;">Nail your diet this summer</div>
<div class="t" style="left:854.3px;top:676.40px;font-size:10.4px;color:#2a2a2a">70<span style="font-size:9px;color:#a8a8a8;margin-left:3.4px;-webkit-text-stroke:0">(9.09%)</span></div>
<div class="t" style="left:930.3px;top:676.40px;font-size:10.4px;color:#2a2a2a">171<span style="font-size:9px;color:#a8a8a8;margin-left:3.4px;-webkit-text-stroke:0">(9.6%)</span></div>
<div class="t" style="left:191px;top:714.80px;font-size:9.8px;font-weight:normal;color:#9a9a9a;width:25px;text-align:right;-webkit-text-stroke:0;">5</div>
<div class="t" style="left:228.9px;top:713.96px;font-size:10.8px;font-weight:bold;color:#1e1e1e;-webkit-text-stroke:0;">Ultimate Flexibility Yoga Bootcamp</div>
<div class="t" style="left:440.8px;top:713.96px;font-size:10.8px;font-weight:normal;color:#2a2a2a;">Instagram</div>
<div class="t" style="left:573.3px;top:713.96px;font-size:10.8px;font-weight:normal;color:#2a2a2a;">Social Media</div>
<div class="t" style="left:653.2px;top:713.96px;font-size:10.8px;font-weight:normal;color:#2a2a2a;">Heal your back pain</div>
<div class="t" style="left:854.3px;top:714.30px;font-size:10.4px;color:#2a2a2a">59<span style="font-size:9px;color:#a8a8a8;margin-left:3.4px;-webkit-text-stroke:0">(7.66%)</span></div>
<div class="t" style="left:930.3px;top:714.30px;font-size:10.4px;color:#2a2a2a">234<span style="font-size:9px;color:#a8a8a8;margin-left:3.4px;-webkit-text-stroke:0">(13.74%)</span></div>
<div class="t" style="left:191px;top:752.70px;font-size:9.8px;font-weight:normal;color:#9a9a9a;width:25px;text-align:right;-webkit-text-stroke:0;">6</div>
<div class="t" style="left:228.9px;top:751.86px;font-size:10.8px;font-weight:bold;color:#1e1e1e;-webkit-text-stroke:0;">FREE 30-Day Whole Food Meal Plan</div>
<div class="t" style="left:440.8px;top:751.86px;font-size:10.8px;font-weight:normal;color:#2a2a2a;">Facebook</div>
<div class="t" style="left:573.3px;top:751.86px;font-size:10.8px;font-weight:normal;color:#2a2a2a;">Social Media</div>
<div class="t" style="left:653.2px;top:751.86px;font-size:10.8px;font-weight:normal;color:#2a2a2a;">Bonus offer</div>
<div class="t" style="left:854.3px;top:752.20px;font-size:10.4px;color:#2a2a2a">56<span style="font-size:9px;color:#a8a8a8;margin-left:3.4px;-webkit-text-stroke:0">(7.27%)</span></div>
<div class="t" style="left:930.3px;top:752.20px;font-size:10.4px;color:#2a2a2a">76<span style="font-size:9px;color:#a8a8a8;margin-left:3.4px;-webkit-text-stroke:0">(4.27%)</span></div>
<div style="position:absolute;left:957px;top:716px;width:42px;height:42px;background:#5123a0;border-radius:50%;box-shadow:0 0 0 1px rgba(255,255,255,0.6);"></div>
<svg style="position:absolute;left:972px;top:730px" width="12" height="14" viewBox="0 0 12 14"><path d="M6,13 V2 M1.5,6.5 L6,2 L10.5,6.5" fill="none" stroke="#fff" stroke-width="1.6"/></svg>
</body></html>
